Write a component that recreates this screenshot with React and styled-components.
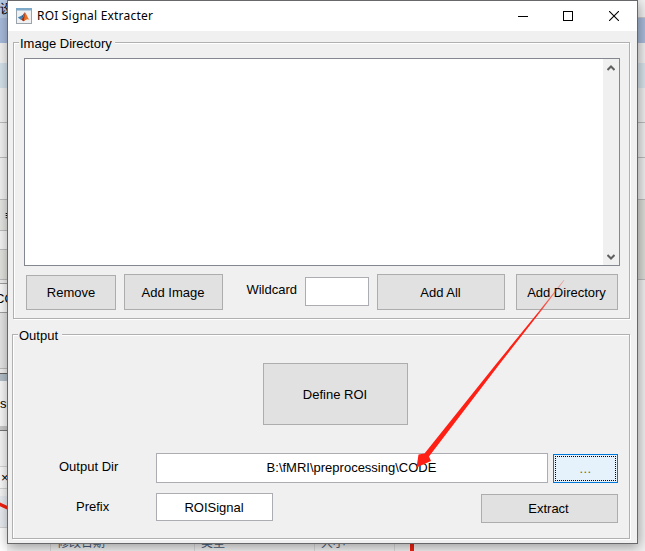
import React, { useState } from 'react';
import styled, { createGlobalStyle } from 'styled-components';

const GlobalStyle = createGlobalStyle`
  * {
    box-sizing: border-box;
  }
  body {
    margin: 0;
    overflow: hidden;
  }
`;

const StyledDesktop = styled.div`
  position: relative;
  width: 645px;
  height: 551px;
  padding-left: 7px;
  overflow: hidden;
  background: #f4f4f4;
  font-family: 'Liberation Sans', Arial, sans-serif;
  font-size: 13px;
  color: #000;
`;

const StyledBackdrop = styled.div`
  position: absolute;
  inset: 0;
  display: flex;
  justify-content: space-between;
`;

const StyledStrip = styled.div`
  display: flex;
  flex-direction: column;
  width: ${({ $width }) => $width}px;
`;

const StyledBand = styled.div`
  flex: none;
  height: ${({ $height }) => $height}px;
  text-indent: ${({ $indent }) => $indent || 0}px;
  white-space: nowrap;
  line-height: ${({ $height }) => $height}px;
  background: ${({ $color }) => $color};
  border-bottom: ${({ $line }) => ($line ? `1px solid ${$line}` : 'none')};
`;

const StyledFileHeader = styled.div`
  align-self: flex-end;
  flex: 1;
  display: flex;
  height: 16px;
  margin-left: 43px;
  font-family: 'Noto Sans CJK SC', sans-serif;
  font-size: 12px;
  line-height: 14px;
  color: #4c607a;
`;

const StyledFileColumn = styled.span`
  width: ${({ $width }) => $width}px;
  padding-left: 6px;
  border-left: 1px solid #dcdcdc;
`;

const StyledMarks = styled.svg`
  position: absolute;
  inset: 0;
  pointer-events: none;
`;

const StyledWindow = styled.div`
  position: relative;
  width: 631px;
  height: 544px;
  background: #f0f0f0;
  border: 1px solid #68686b;
  box-shadow: 1px 3px 12px rgba(0, 0, 0, 0.38);
`;

const StyledTitleBar = styled.div`
  display: flex;
  align-items: center;
  height: 30px;
  padding-left: 8px;
  background: #fff;
`;

const StyledTitle = styled.span`
  flex: 1;
  padding-left: 5px;
  font-family: 'Noto Sans', sans-serif;
  font-size: 12px;
  line-height: 28px;
  letter-spacing: 0.2px;
`;

const WindowButton = styled.button`
  display: flex;
  align-items: center;
  justify-content: center;
  width: ${({ $width }) => $width || 46}px;
  height: 30px;
  padding: 0;
  border: none;
  background: transparent;
`;

const StyledBody = styled.div`
  padding: 11px 7px 0 4px;
`;

const StyledGroup = styled.div`
  height: ${({ $height }) => $height}px;
  border: 1px solid #b0b0b0;
  box-shadow: 1px 1px 0 #fff, inset 1px 1px 0 #fff;
`;

const ImageGroup = styled(StyledGroup)`
  margin-left: 1px;
  padding-left: 10px;
`;

const OutputGroup = styled(StyledGroup)`
  margin-top: 15px;
  padding-right: 11px;
`;

const StyledCaption = styled.div`
  width: ${({ $width }) => $width}px;
  height: 16px;
  margin-top: -8px;
  margin-left: ${({ $offset }) => $offset}px;
  padding-left: 1px;
  background: #f0f0f0;
  line-height: 17px;
  white-space: nowrap;
`;

const StyledListBox = styled.div`
  display: flex;
  justify-content: flex-end;
  width: 596px;
  height: 208px;
  margin-top: 7px;
  background: #fff;
  border: 1px solid #828790;
`;

const StyledScrollBar = styled.div`
  display: flex;
  flex-direction: column;
  justify-content: space-between;
  align-items: center;
  width: 16px;
  padding: 6px 1px 5px 0;
  background: #f0f0f0;
`;

const StyledImageActions = styled.div`
  display: grid;
  grid-template-columns: 90px 99px 66px 64px 128px 105px;
  column-gap: 8px;
  align-items: end;
  height: 36px;
  margin: 8px 0 0 2px;
`;

const StyledButton = styled.button`
  height: ${({ $height }) => $height || 36}px;
  padding: 1px 1px 0 0;
  border: 1px solid #adadad;
  background: #e1e1e1;
  color: #000;
  font: inherit;
`;

const RemoveButton = styled(StyledButton)`
  padding: 0 0 1px;
`;

const DirectoryButton = styled(StyledButton)`
  margin-left: 3px;
`;

const DefineButton = styled(StyledButton)`
  display: block;
  width: 145px;
  margin: 20px 0 28px 250px;
`;

const BrowseButton = styled(StyledButton)`
  width: 65px;
  margin-left: 5px;
  padding: 1px;
  border-color: #0078d7;
  background: #e5f1fb;
`;

const FocusFrame = styled.span`
  display: flex;
  align-items: center;
  justify-content: center;
  height: 100%;
  border: 1px dotted #000;
  color: #7d6420;
  letter-spacing: 0.4px;
`;

const ExtractButton = styled(StyledButton)`
  width: 137px;
  margin-left: auto;
  padding: 0 2px 1px 0;
`;

const StyledInput = styled.input`
  width: ${({ $width }) => $width}px;
  height: ${({ $height }) => $height}px;
  padding: 0 1px 2px 0;
  border: 1px solid #abadb3;
  border-radius: 0;
  background: #fff;
  color: #000;
  font: inherit;
  text-align: center;
  outline: none;
`;

const WildcardInput = styled(StyledInput)`
  margin-bottom: 4px;
`;

const PrefixInput = styled(StyledInput)`
  align-self: flex-start;
  padding-bottom: 0;
`;

const WildcardLabel = styled.label`
  padding-bottom: 13px;
  text-align: right;
`;

const StyledRow = styled.div`
  display: flex;
  align-items: flex-end;
  height: 30px;
  margin-bottom: 10px;
`;

const StyledLabel = styled.label`
  align-self: center;
  width: 143px;
  padding-left: ${({ $indent }) => $indent}px;
  padding-bottom: 3px;
`;

const LINE = '#bdbdbd';

const leftBands = [
  { $height: 18, $color: '#b9cbe4', text: '设' },
  { $height: 25, $color: '#a9bcdd' },
  { $height: 20, $color: '#f3f3f3' },
  { $height: 25, $color: '#d6e2eb' },
  { $height: 35, $color: '#f3f3f3', $line: LINE },
  { $height: 35, $color: '#f3f3f3', $line: LINE },
  { $height: 42, $color: '#f3f3f3', $line: LINE },
  { $height: 31, $color: '#e6e6e3', $line: LINE, $indent: 5, text: '≡' },
  { $height: 19, $color: '#f5f5f5', $line: LINE },
  { $height: 30, $color: '#e3e3e0', $line: LINE },
  { $height: 4, $color: '#f0f0f0', $line: '#a0a0a0' },
  { $height: 29, $color: '#fafafa', $line: '#a0a0a0', $indent: -5, text: 'CO' },
  { $height: 56, $color: '#e6e6e6', $line: LINE },
  { $height: 5, $color: '#f0f0f0', $line: '#666' },
  { $height: 7, $color: '#b3bfca' },
  { $height: 45, $color: '#f8f8f8', text: 's' },
  { $height: 5, $color: '#c9c9c9', $line: '#777' },
  { $height: 36, $color: '#f6f6f6', $line: '#d5d5d5' },
  { $height: 22, $color: '#fafafa', $line: '#d5d5d5', $indent: 1, text: '×' },
  { $height: 7, $color: '#f6f6f6' },
  { $height: 32, $color: '#e9edf2', $line: '#d5d5d5' },
  { $height: 23, $color: '#fff' },
];

const rightBands = [
  { $height: 18, $color: '#f2f2f2', $line: '#ccc' },
  { $height: 25, $color: '#abbddd' },
  { $height: 20, $color: '#f1f1f1' },
  { $height: 25, $color: '#d9e5ed' },
  { $height: 35, $color: '#f1f1f1', $line: LINE },
  { $height: 35, $color: '#f1f1f1', $line: LINE },
  { $height: 42, $color: '#f1f1f1', $line: LINE },
  { $height: 80, $color: '#dededb', $line: LINE },
  { $height: 271, $color: '#f2f2f2' },
];

const Strip = ({ bands, width }) => (
  <StyledStrip $width={width}>
    {bands.map(({ text, ...band }, index) => (
      <StyledBand key={index} {...band}>
        {text}
      </StyledBand>
    ))}
  </StyledStrip>
);

const MatlabIcon = () => (
  <svg width="16" height="16" viewBox="0 0 16 16">
    <rect x="0.5" y="0.5" width="15" height="15" fill="#eef0f2" stroke="#9ba4ab" />
    <rect x="0" y="0" width="16" height="2.5" fill="#7fa9c8" />
    <path d="M1.8 9.5 L4.8 8 L6.8 10 L4.8 11.8 Z" fill="#3d82b4" />
    <path d="M4.8 8 C6.8 7.6 7.3 6 8.8 4.2 L6.8 10 Z" fill="#265c86" />
    <path d="M8.8 4.2 C7.8 8 6.8 10.2 4.8 11.8 C6.2 11.6 6.6 13.4 7.5 13.3 C9 13 9.4 10.6 11 11 Z" fill="#9b2c18" />
    <path d="M8.8 4.2 C10.4 5.2 11.5 10 13.8 12.1 C11.5 10.4 10 11.5 7.5 13.3 C8.5 10.5 8.7 7 8.8 4.2 Z" fill="#ea6f23" />
  </svg>
);

const Chevron = ({ d }) => (
  <svg width="8" height="6" viewBox="0 0 8 6">
    <path d={d} fill="none" stroke="#606060" strokeWidth="2" />
  </svg>
);

const App = () => {
  const [form, setForm] = useState({
    wildcard: '',
    outputDir: 'B:\\fMRI\\preprocessing\\CODE',
    prefix: 'ROISignal',
  });

  const handleChange = e => {
    const { name, value } = e.target;
    setForm(prev => ({ ...prev, [name]: value }));
  };

  return (
    <>
      <GlobalStyle />
      <StyledDesktop>
        <StyledBackdrop>
          <Strip bands={leftBands} width={7} />
          <StyledFileHeader>
            <StyledFileColumn $width={144}>修改日期</StyledFileColumn>
            <StyledFileColumn $width={120}>类型</StyledFileColumn>
            <StyledFileColumn $width={80}>大小</StyledFileColumn>
            <StyledFileColumn $width={235} />
          </StyledFileHeader>
          <Strip bands={rightBands} width={16} />
        </StyledBackdrop>
        <StyledMarks width="645" height="551">
          <path d="M-1 504 L9 508.5" stroke="#f5200f" strokeWidth="3.5" />
          <path d="M412 540 V551" stroke="#f5200f" strokeWidth="4" />
        </StyledMarks>

        <StyledWindow>
          <StyledTitleBar>
            <MatlabIcon />
            <StyledTitle>ROI Signal Extracter</StyledTitle>
            <WindowButton $width={44} aria-label="Minimize">
              <svg width="10" height="10">
                <path d="M0 5.5 H10" stroke="#000" />
              </svg>
            </WindowButton>
            <WindowButton aria-label="Maximize">
              <svg width="10" height="10">
                <rect x="0.5" y="0.5" width="9" height="9" fill="none" stroke="#000" />
              </svg>
            </WindowButton>
            <WindowButton aria-label="Close">
              <svg width="10" height="10">
                <path d="M0 0 L10 10 M10 0 L0 10" stroke="#000" strokeWidth="1.1" />
              </svg>
            </WindowButton>
          </StyledTitleBar>

          <StyledBody>
            <ImageGroup $height={277}>
              <StyledCaption $width={96} $offset={-5}>
                Image Directory
              </StyledCaption>
              <StyledListBox>
                <StyledScrollBar>
                  <Chevron d="M0.5 5 L4 1.5 L7.5 5" />
                  <Chevron d="M0.5 1 L4 4.5 L7.5 1" />
                </StyledScrollBar>
              </StyledListBox>
              <StyledImageActions>
                <RemoveButton $height={35}>Remove</RemoveButton>
                <StyledButton>Add Image</StyledButton>
                <WildcardLabel>Wildcard</WildcardLabel>
                <WildcardInput
                  name="wildcard"
                  value={form.wildcard}
                  onChange={handleChange}
                  $width={64}
                  $height={29}
                />
                <StyledButton>Add All</StyledButton>
                <DirectoryButton>Add Directory</DirectoryButton>
              </StyledImageActions>
            </ImageGroup>

            <OutputGroup $height={205}>
              <StyledCaption $width={44} $offset={5}>
                Output
              </StyledCaption>
              <DefineButton $height={62}>Define ROI</DefineButton>
              <StyledRow>
                <StyledLabel $indent={46}>Output Dir</StyledLabel>
                <StyledInput
                  name="outputDir"
                  value={form.outputDir}
                  onChange={handleChange}
                  $width={392}
                  $height={30}
                />
                <BrowseButton $height={29}>
                  <FocusFrame>...</FocusFrame>
                </BrowseButton>
              </StyledRow>
              <StyledRow>
                <StyledLabel $indent={63}>Prefix</StyledLabel>
                <PrefixInput
                  name="prefix"
                  value={form.prefix}
                  onChange={handleChange}
                  $width={117}
                  $height={28}
                />
                <ExtractButton $height={29}>Extract</ExtractButton>
              </StyledRow>
            </OutputGroup>
          </StyledBody>
        </StyledWindow>

        {/* hand-drawn arrow from "Add Directory" to the output path */}
        <StyledMarks width="645" height="551">
          <defs>
            <linearGradient id="tail" gradientUnits="userSpaceOnUse" x1="564" y1="281" x2="535" y2="317">
              <stop offset="0" stopColor="#ff2015" stopOpacity="0.25" />
              <stop offset="1" stopColor="#ff2015" />
            </linearGradient>
          </defs>
          <path
            d="M563.8 279.8 L564.4 280.4 L539.5 313 L500 363.5 L429 456.5 L431 461 L416.5 467.5 L418.5 454.5 L424.5 453.5 L496.5 363.5 L538 312.5 Z"
            fill="url(#tail)"
          />
        </StyledMarks>
      </StyledDesktop>
    </>
  );
};

export default App;
